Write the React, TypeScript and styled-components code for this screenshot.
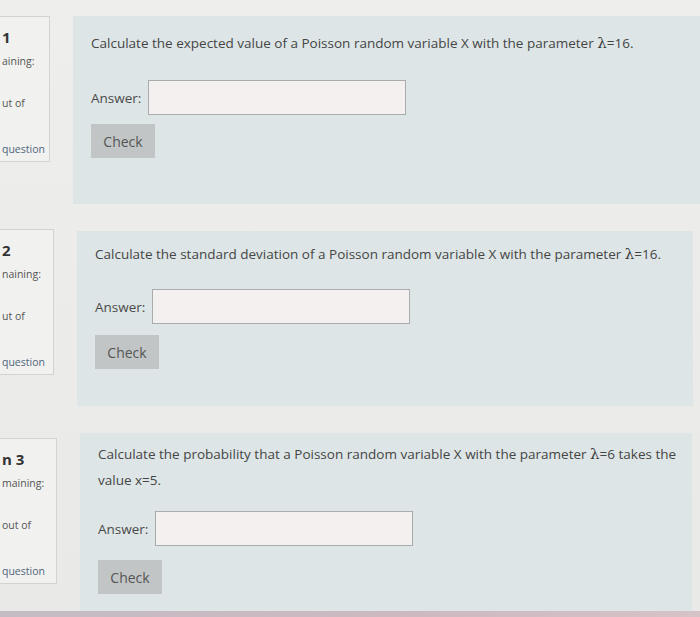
import styled, { createGlobalStyle } from 'styled-components'

const GlobalStyle = createGlobalStyle`
  html, body {
    margin: 0;
    padding: 0;
    background: #ecebe9;
  }
  body {
    font-family: 'Open Sans', 'Noto Sans', sans-serif;
    color: #4a4a4a;
  }
`

const Page = styled.div`
  width: 700px;
  height: 617px;
  overflow: hidden;
  display: flex;
  flex-direction: column;
  background: linear-gradient(180deg, #eeeeec 0%, #e9e9e7 100%);
`

const Questions = styled.div`
  flex: 1;
  min-height: 0;
  display: flex;
  flex-direction: column;
  gap: 27px;
  padding-top: 16px;
`

const Row = styled.div<{ $indent: number }>`
  display: grid;
  grid-template-columns: ${(p) => p.$indent}px 1fr;
  column-gap: 23px;
  align-items: start;
`

const Info = styled.div<{ $top: number }>`
  margin-top: ${(p) => p.$top}px;
  height: 146px;
  box-sizing: border-box;
  background: #f1f1ef;
  border: 1px solid #d3d3d1;
  border-left: none;
  padding: 11px 0 0 2px;
  display: flex;
  flex-direction: column;
  font-size: 10.5px;
  color: #555;
  white-space: nowrap;
  overflow: hidden;
`

const QNo = styled.div`
  font-size: 15px;
  font-weight: 700;
  color: #333;
  line-height: 18px;
  height: 18px;
`

const InfoLine = styled.div<{ $gap: number; $link?: boolean }>`
  line-height: 14px;
  margin-top: ${(p) => p.$gap}px;
  color: ${(p) => (p.$link ? '#50657c' : '#555')};
`

const Content = styled.div<{ $right: number; $top: number; $bottom: number }>`
  background: #dde5e6;
  margin-right: ${(p) => p.$right}px;
  padding: ${(p) => p.$top}px 6px ${(p) => p.$bottom}px 18px;
  display: flex;
  flex-direction: column;
`

const QText = styled.p`
  margin: 0;
  font-size: 13.5px;
  line-height: 26px;
  color: #454545;
`

const Lambda = styled.span`
  font-family: 'DejaVu Serif', 'Liberation Serif', serif;
  font-size: 15px;
  line-height: 0;
  color: #3a3a3a;
`

const AnswerRow = styled.div<{ $gap: number }>`
  display: flex;
  align-items: center;
  gap: 3px;
  margin-top: ${(p) => p.$gap}px;
`

const Label = styled.label`
  font-size: 13.5px;
  color: #4a4a4a;
  width: 54px;
`

const Input = styled.input`
  width: 258px;
  height: 35px;
  box-sizing: border-box;
  background: #f4f0f0;
  border: 1px solid #a9acac;
  outline: none;
`

const CheckButton = styled.button<{ $gap: number }>`
  margin-top: ${(p) => p.$gap}px;
  align-self: flex-start;
  width: 64px;
  height: 34px;
  border: none;
  background: #c1c5c5;
  color: #555;
  font-family: inherit;
  font-size: 14px;
`

const BottomStrip = styled.div`
  flex-shrink: 0;
  height: 6px;
  background: linear-gradient(90deg, #c4bcc4 0%, #cdb9c0 60%, #d5c3c8 100%);
`

const questions = [
  {
    no: '1',
    indent: 50,
    infoTop: 0,
    right: 0,
    padTop: 14,
    answerGap: 24,
    checkGap: 9,
    bottom: 46,
    lines: ['aining:', 'ut of', 'question'],
    text: (
      <>
        Calculate the expected value of a Poisson random variable X with the parameter <Lambda>λ</Lambda>=16.
      </>
    ),
  },
  {
    no: '2',
    indent: 54,
    infoTop: -2,
    right: 7,
    padTop: 10,
    answerGap: 22,
    checkGap: 11,
    bottom: 37,
    lines: ['naining:', 'ut of', 'question'],
    text: (
      <>
        Calculate the standard deviation of a Poisson random variable X with the parameter <Lambda>λ</Lambda>=16.
      </>
    ),
  },
  {
    no: 'n 3',
    indent: 57,
    infoTop: 5,
    right: 8,
    padTop: 8,
    answerGap: 18,
    checkGap: 14,
    bottom: 20,
    lines: ['maining:', 'out of', 'question'],
    text: (
      <>
        Calculate the probability that a Poisson random variable X with the parameter <Lambda>λ</Lambda>=6 takes the
        <br />
        value x=5.
      </>
    ),
  },
]

function App() {
  return (
    <>
      <GlobalStyle />
      <Page>
        <Questions>
          {questions.map((q) => (
            <Row key={q.no} $indent={q.indent}>
              <Info $top={q.infoTop}>
                <QNo>{q.no}</QNo>
                <InfoLine $gap={8}>{q.lines[0]}</InfoLine>
                <InfoLine $gap={28}>{q.lines[1]}</InfoLine>
                <InfoLine $gap={32} $link>
                  {q.lines[2]}
                </InfoLine>
              </Info>
              <Content $right={q.right} $top={q.padTop} $bottom={q.bottom}>
                <QText>{q.text}</QText>
                <AnswerRow $gap={q.answerGap}>
                  <Label>Answer:</Label>
                  <Input type='text' />
                </AnswerRow>
                <CheckButton $gap={q.checkGap}>Check</CheckButton>
              </Content>
            </Row>
          ))}
        </Questions>
        <BottomStrip />
      </Page>
    </>
  )
}

export default App
